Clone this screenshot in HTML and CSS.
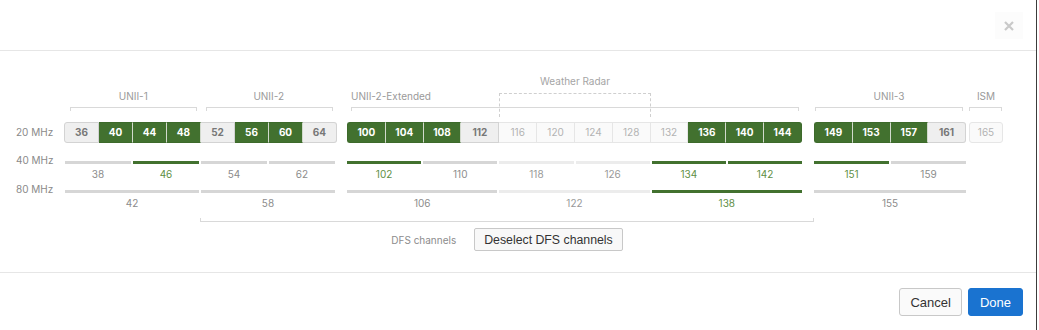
FILE: index.html
```html
<!DOCTYPE html>
<html>
<head>
<meta charset="utf-8">
<link rel="stylesheet" href="styles.css">
</head>
<body>
<div class="modal">
  <div class="header">
    <button class="close" aria-label="Close">
      <svg width="10" height="10" viewBox="0 0 10 10"><path d="M1 1L9 9M9 1L1 9" stroke="#c9c9c9" stroke-width="2.2" stroke-linecap="butt"/></svg>
    </button>
  </div>
  <div class="content">
    <div class="row bands">
      <div class="rlabel"></div>
      <div class="grp g1 split">
        <div class="band b-unii1"><div class="band-label">UNII-1</div><div class="bracket"></div></div>
        <div class="band b-unii2"><div class="band-label">UNII-2</div><div class="bracket"></div></div>
      </div>
      <div class="grp g2">
        <div class="band b-ext"><div class="band-label left">UNII-2-Extended</div><div class="bracket"></div></div>
        <div class="radar">
          <div class="radar-label">Weather Radar</div>
          <div class="radar-box"></div>
        </div>
      </div>
      <div class="grp g3">
        <div class="band b-unii3"><div class="band-label">UNII-3</div><div class="bracket"></div></div>
      </div>
      <div class="grp g4">
        <div class="band b-ism"><div class="band-label">ISM</div><div class="bracket"></div></div>
      </div>
    </div>

    <div class="row cells-row">
      <div class="rlabel mid">20 MHz</div>
      <div class="grp g1 cells">
        <div class="cell off">36</div><div class="cell on">40</div><div class="cell on">44</div><div class="cell on">48</div>
        <div class="cell off">52</div><div class="cell on">56</div><div class="cell on">60</div><div class="cell off">64</div>
      </div>
      <div class="grp g2 cells">
        <div class="cell on">100</div><div class="cell on">104</div><div class="cell on">108</div><div class="cell off">112</div>
        <div class="cell dis">116</div><div class="cell dis">120</div><div class="cell dis">124</div><div class="cell dis">128</div>
        <div class="cell dis">132</div><div class="cell on">136</div><div class="cell on">140</div><div class="cell on">144</div>
      </div>
      <div class="grp g3 cells">
        <div class="cell on">149</div><div class="cell on">153</div><div class="cell on">157</div><div class="cell off">161</div>
      </div>
      <div class="grp g4 cells">
        <div class="cell dis">165</div>
      </div>
    </div>

    <div class="row bar-row r40">
      <div class="rlabel">40 MHz</div>
      <div class="grp g1 bars inset">
        <div class="bi"><div class="bar"></div><div class="num">38</div></div>
        <div class="bi"><div class="bar on"></div><div class="num on">46</div></div>
        <div class="bi"><div class="bar"></div><div class="num">54</div></div>
        <div class="bi"><div class="bar"></div><div class="num">62</div></div>
      </div>
      <div class="grp g2 bars">
        <div class="bi"><div class="bar on"></div><div class="num on">102</div></div>
        <div class="bi"><div class="bar"></div><div class="num">110</div></div>
        <div class="bi"><div class="bar dis"></div><div class="num dis">118</div></div>
        <div class="bi"><div class="bar dis"></div><div class="num dis">126</div></div>
        <div class="bi"><div class="bar on"></div><div class="num on">134</div></div>
        <div class="bi"><div class="bar on"></div><div class="num on">142</div></div>
      </div>
      <div class="grp g3 bars">
        <div class="bi"><div class="bar on"></div><div class="num on">151</div></div>
        <div class="bi"><div class="bar"></div><div class="num">159</div></div>
      </div>
    </div>

    <div class="row bar-row r80">
      <div class="rlabel">80 MHz</div>
      <div class="grp g1 bars inset">
        <div class="bi"><div class="bar"></div><div class="num">42</div></div>
        <div class="bi"><div class="bar"></div><div class="num">58</div></div>
      </div>
      <div class="grp g2 bars">
        <div class="bi"><div class="bar"></div><div class="num">106</div></div>
        <div class="bi"><div class="bar dis"></div><div class="num dis">122</div></div>
        <div class="bi"><div class="bar on"></div><div class="num on">138</div></div>
      </div>
      <div class="grp g3 bars">
        <div class="bi"><div class="bar"></div><div class="num">155</div></div>
      </div>
    </div>

    <div class="dfs">
      <div class="dfs-bracket"></div>
      <div class="dfs-actions">
        <span class="dfs-label">DFS channels</span>
        <button class="btn-dfs">Deselect DFS channels</button>
      </div>
    </div>
  </div>
  <div class="footer">
    <button class="btn btn-cancel">Cancel</button>
    <button class="btn btn-done">Done</button>
  </div>
</div>
</body>
</html>
```

FILE: styles.css
```css
* { box-sizing: border-box; }
html, body { margin: 0; padding: 0; background: #fff; }
body { font-family: Inter, "Liberation Sans", sans-serif; }

.modal {
  width: 1037px;
  height: 330px;
  background: #fff;
  border-right: 1px solid #3c3c3c;
  display: flex;
  flex-direction: column;
}

.header {
  height: 51px;
  border-bottom: 1px solid #e6e6e6;
  display: flex;
  justify-content: flex-end;
  align-items: flex-start;
  padding: 12px 13px 0 0;
}
.close {
  width: 28px;
  height: 27px;
  border: none;
  background: #fcfcfc;
  padding: 0;
  display: flex;
  align-items: center;
  justify-content: center;
}

.content {
  height: 221px;
  padding-left: 16px;
}

.row { display: flex; }
.rlabel {
  width: 48px;
  flex: none;
  font-size: 10px;
  line-height: 12px;
  color: #8a8a8a;
  white-space: nowrap;
}
.rlabel.mid { line-height: 21px; }

.grp { flex: none; }
.g1 { width: 273px; }
.g2 { width: 455px; margin-left: 10px; }
.g3 { width: 152px; margin-left: 12px; }
.g4 { width: 34px; margin-left: 3px; }

/* band headers */
.bands { padding-top: 39px; }
.g2 { position: relative; }
.split { display: flex; }
.split .band { flex: 1; }
.band-label {
  font-size: 10px;
  line-height: 12px;
  color: #9a9a9a;
  text-align: center;
  white-space: nowrap;
}
.band-label.left { text-align: left; padding-left: 4px; }
.bracket {
  height: 4px;
  margin-top: 5px;
  border: 1px solid #d9d9d9;
  border-bottom: none;
}
.b-unii1 .bracket { margin-left: 6px; margin-right: 4px; }
.b-unii1 .band-label { padding-left: 2px; }
.b-unii2 .bracket { margin-left: 5px; margin-right: 4px; }
.b-ext .bracket { margin-left: 4px; margin-right: 3px; }
.b-unii3 .bracket { margin-left: 1px; margin-right: 3px; }
.b-unii3 .band-label { padding-right: 2px; }
.b-ism .bracket { margin-left: 0; margin-right: 1px; }

.radar {
  position: absolute;
  left: 152px;
  top: -15px;
  width: 152px;
}
.radar-label {
  font-size: 10px;
  line-height: 12px;
  color: #a5a5a5;
  text-align: center;
}
.radar-box {
  margin-top: 6px;
  height: 24px;
  border: 1px dashed #cfcfcf;
  border-bottom: none;
}

/* 20 MHz cells */
.cells-row { margin-top: 11px; }
.cells { display: flex; }
.cell {
  flex: 1;
  height: 21px;
  line-height: 19px;
  text-align: center;
  font-size: 10px;
  font-weight: 700;
  border-top: 1px solid;
  border-bottom: 1px solid;
  border-right: 1px solid;
}
.cell:first-child { border-left: 1px solid; border-radius: 3px 0 0 3px; }
.cell:last-child { border-radius: 0 3px 3px 0; }
.cell:only-child { border-radius: 3px; }
.cell.off {
  background: #efefef;
  color: #777;
  border-color: #d3d3d3;
}
.cell.on {
  background: #42712f;
  color: #fff;
  border-top-color: #3d6a2b;
  border-bottom-color: #3d6a2b;
  border-left-color: #3d6a2b;
  border-right-color: #d2dacd;
}
.cell.on:last-child { border-right-color: #3d6a2b; }
.cell.dis {
  background: #fafafa;
  color: #b3b3b3;
  font-weight: 400;
  border-color: #e6e6e6;
}

/* bars */
.bar-row { align-items: flex-start; }
.r40 { margin-top: 11px; }
.r80 { margin-top: 3px; }
.bars { display: flex; gap: 2px; padding-top: 7px; }
.bars.inset { padding-left: 1px; padding-right: 2px; }
.bi { flex: 1; }
.bar { height: 3px; background: #d6d6d6; }
.bar.on { background: #42712f; }
.bar.dis { background: #ececec; }
.num {
  margin-top: 4px;
  font-size: 10px;
  line-height: 12px;
  color: #8c8c8c;
  text-align: center;
}
.num.on { color: #5f8f45; }
.num.dis { color: #999; }

/* DFS */
.dfs { margin-left: 184px; width: 614px; margin-top: 9px; }
.dfs-bracket {
  height: 4px;
  border: 1px solid #d9d9d9;
  border-top: none;
}
.dfs-actions {
  margin-top: 6px;
  display: flex;
  justify-content: center;
  align-items: center;
  gap: 18px;
}
.dfs-label { font-size: 10px; color: #8c8c8c; }
.btn-dfs {
  height: 23px;
  padding: 0 9px;
  border: 1px solid #c8c8c8;
  border-radius: 2px;
  background: #f8f8f8;
  color: #333;
  font-family: "Liberation Sans", Arial, sans-serif;
  font-size: 12.3px;
}

/* footer */
.footer {
  border-top: 1px solid #e6e6e6;
  padding: 15px 13px 0 0;
  display: flex;
  justify-content: flex-end;
  gap: 6px;
}
.btn {
  height: 28px;
  padding: 0 11px;
  border-radius: 3px;
  font-family: "Liberation Sans", Arial, sans-serif;
  font-size: 13px;
}
.btn-cancel { background: #fafafa; border: 1px solid #c8c8c8; color: #333; padding: 0 10px; }
.btn-done { background: #1a73d0; border: 1px solid #1a73d0; color: #fff; }
```
